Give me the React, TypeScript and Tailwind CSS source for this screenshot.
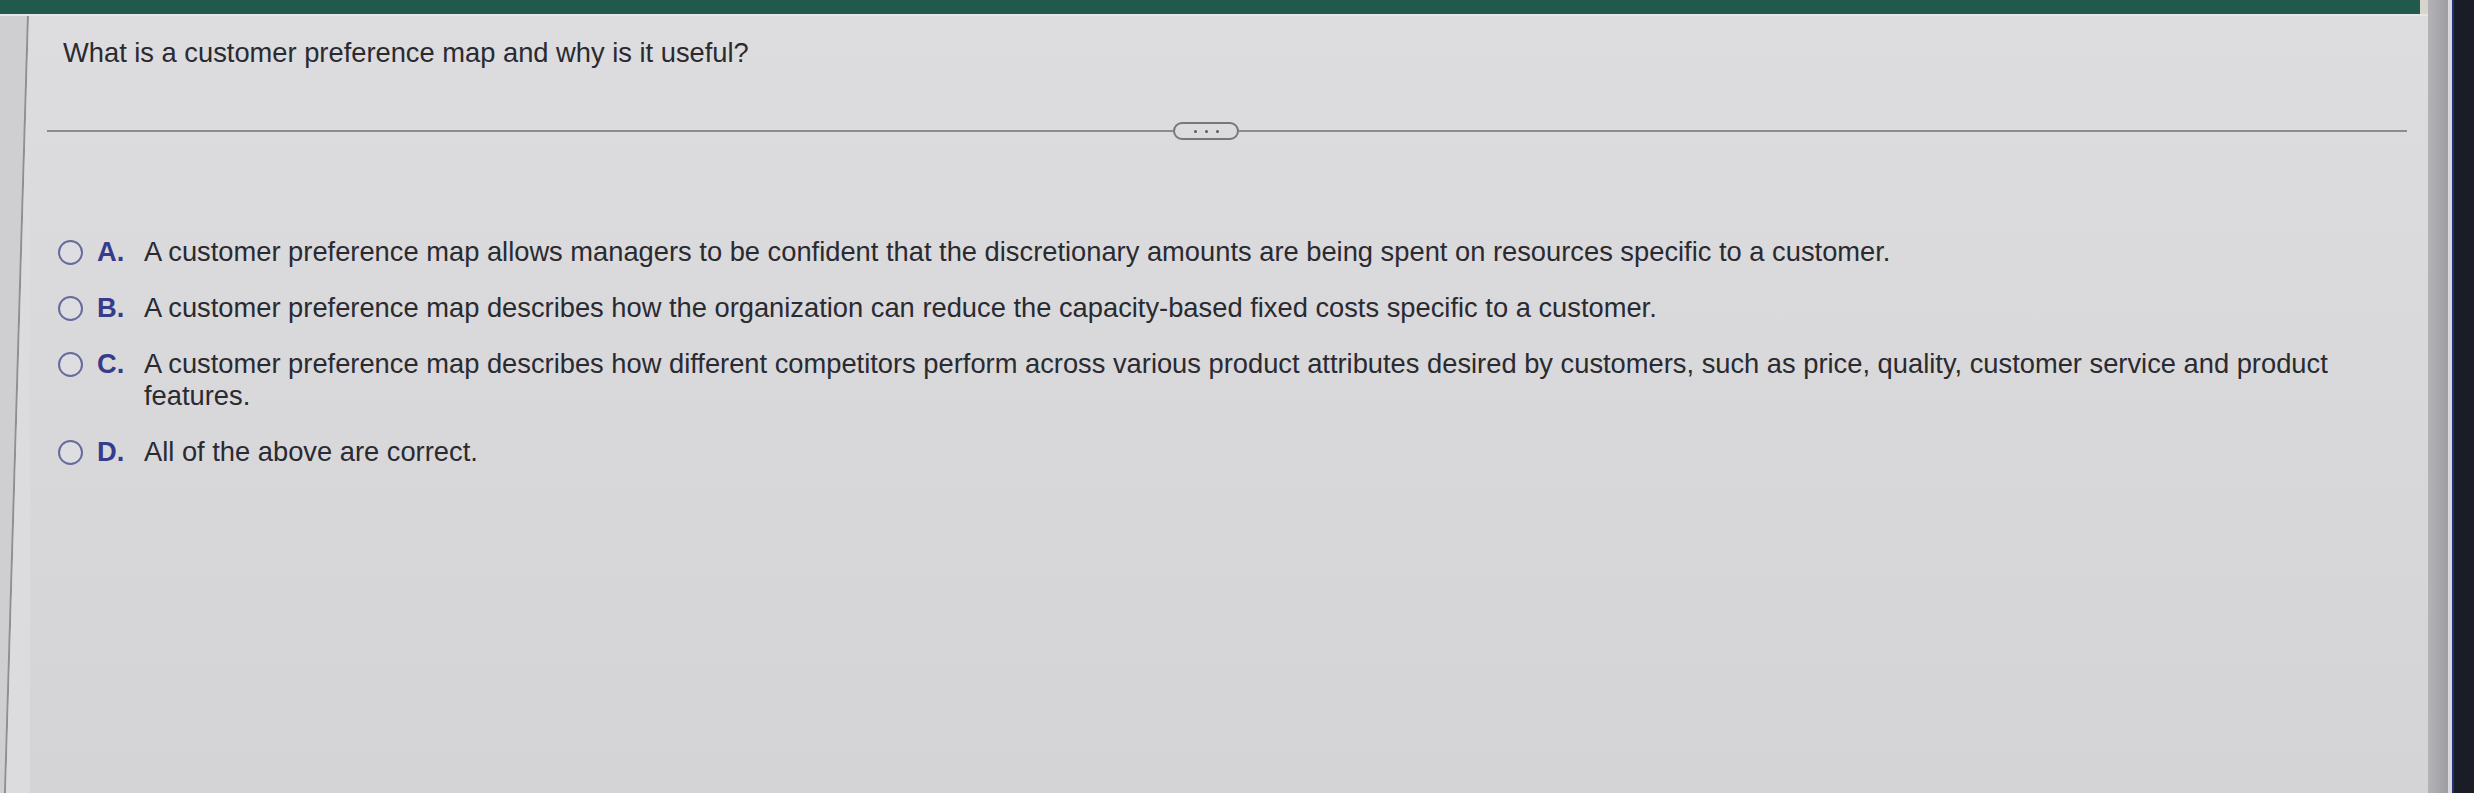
import React from "react";

const options = [
  {
    letter: "A.",
    text: "A customer preference map allows managers to be confident that the discretionary amounts are being spent on resources specific to a customer.",
  },
  {
    letter: "B.",
    text: "A customer preference map describes how the organization can reduce the capacity-based fixed costs specific to a customer.",
  },
  {
    letter: "C.",
    text: "A customer preference map describes how different competitors perform across various product attributes desired by customers, such as price, quality, customer service and product features.",
  },
  { letter: "D.", text: "All of the above are correct." },
];

export default function App() {
  return (
    <div
      className="w-[2474px] h-[793px] flex flex-row overflow-hidden bg-[#d8d8da]"
      style={{ fontFamily: '"Liberation Sans", Arial, sans-serif' }}
    >
      {/* main column */}
      <div className="w-[2428px] flex flex-col">
        <div className="flex flex-row h-[14px]">
          <div className="flex-1 bg-[#215a4c]" />
          <div className="w-[8px] bg-[#d6d4cc]" />
        </div>
        <div className="h-[2px] bg-[#e6e6e6]" />
        <div className="flex-1 flex flex-row bg-linear-to-b from-[#dddcde] to-[#d4d4d6]">
          {/* left edge strip */}
          <div className="w-[30px] shrink-0 bg-[#d2d2d4]">
            <svg width="30" height="777" viewBox="0 0 30 777" preserveAspectRatio="none" className="block">
              <polygon points="0,0 28,0 5,777 0,777" fill="#cfcfd1" />
              <line x1="28" y1="0" x2="5" y2="777" stroke="#8f8f93" strokeWidth="2" />
              <polygon points="29,0 30,0 30,777 6,777" fill="#dcdcde" />
            </svg>
          </div>
          <div className="flex-1 flex flex-col pt-[21px]">
            <div className="pl-[33px] text-[27.3px] leading-[32px] text-[#2a2a31]">
              What is a customer preference map and why is it useful?
            </div>
            <div className="mt-[53px] ml-[17px] mr-[21px] flex flex-row items-center h-[18px]">
              <div className="w-[1126px] h-[2px] bg-[#8c8c90]" />
              <div className="w-[66px] h-[18px] rounded-full border-2 border-[#76767b] flex items-center justify-center gap-[8px]">
                <span className="w-[3px] h-[3px] rounded-full bg-[#5d5d62]" />
                <span className="w-[3px] h-[3px] rounded-full bg-[#5d5d62]" />
                <span className="w-[3px] h-[3px] rounded-full bg-[#5d5d62]" />
              </div>
              <div className="flex-1 h-[2px] bg-[#8c8c90]" />
            </div>
            <div className="mt-[96px] flex flex-col gap-[24px] pr-[24px]">
              {options.map((o) => (
                <div key={o.letter} className="flex flex-row items-start text-[27.3px] leading-[32px]">
                  <div className="ml-[28px] h-[32px] flex items-center shrink-0">
                    <div className="w-[25px] h-[25px] rounded-full border-[2.5px] border-[#676a9e] bg-[#dddde2]" />
                  </div>
                  <div className="ml-[14px] w-[47px] shrink-0 font-bold text-[#363b8c]">{o.letter}</div>
                  <div className="flex-1 text-[#2a2a31]">{o.text}</div>
                </div>
              ))}
            </div>
          </div>
        </div>
      </div>
      {/* right bezel strips */}
      <div className="w-[20px] bg-linear-to-r from-[#b3b2b6] to-[#9e9da2]" />
      <div className="w-[4px] bg-[#d9d9dd]" />
      <div className="w-[2px] bg-[#23307a]" />
      <div className="flex-1 bg-[#1b1d26]" />
    </div>
  );
}
